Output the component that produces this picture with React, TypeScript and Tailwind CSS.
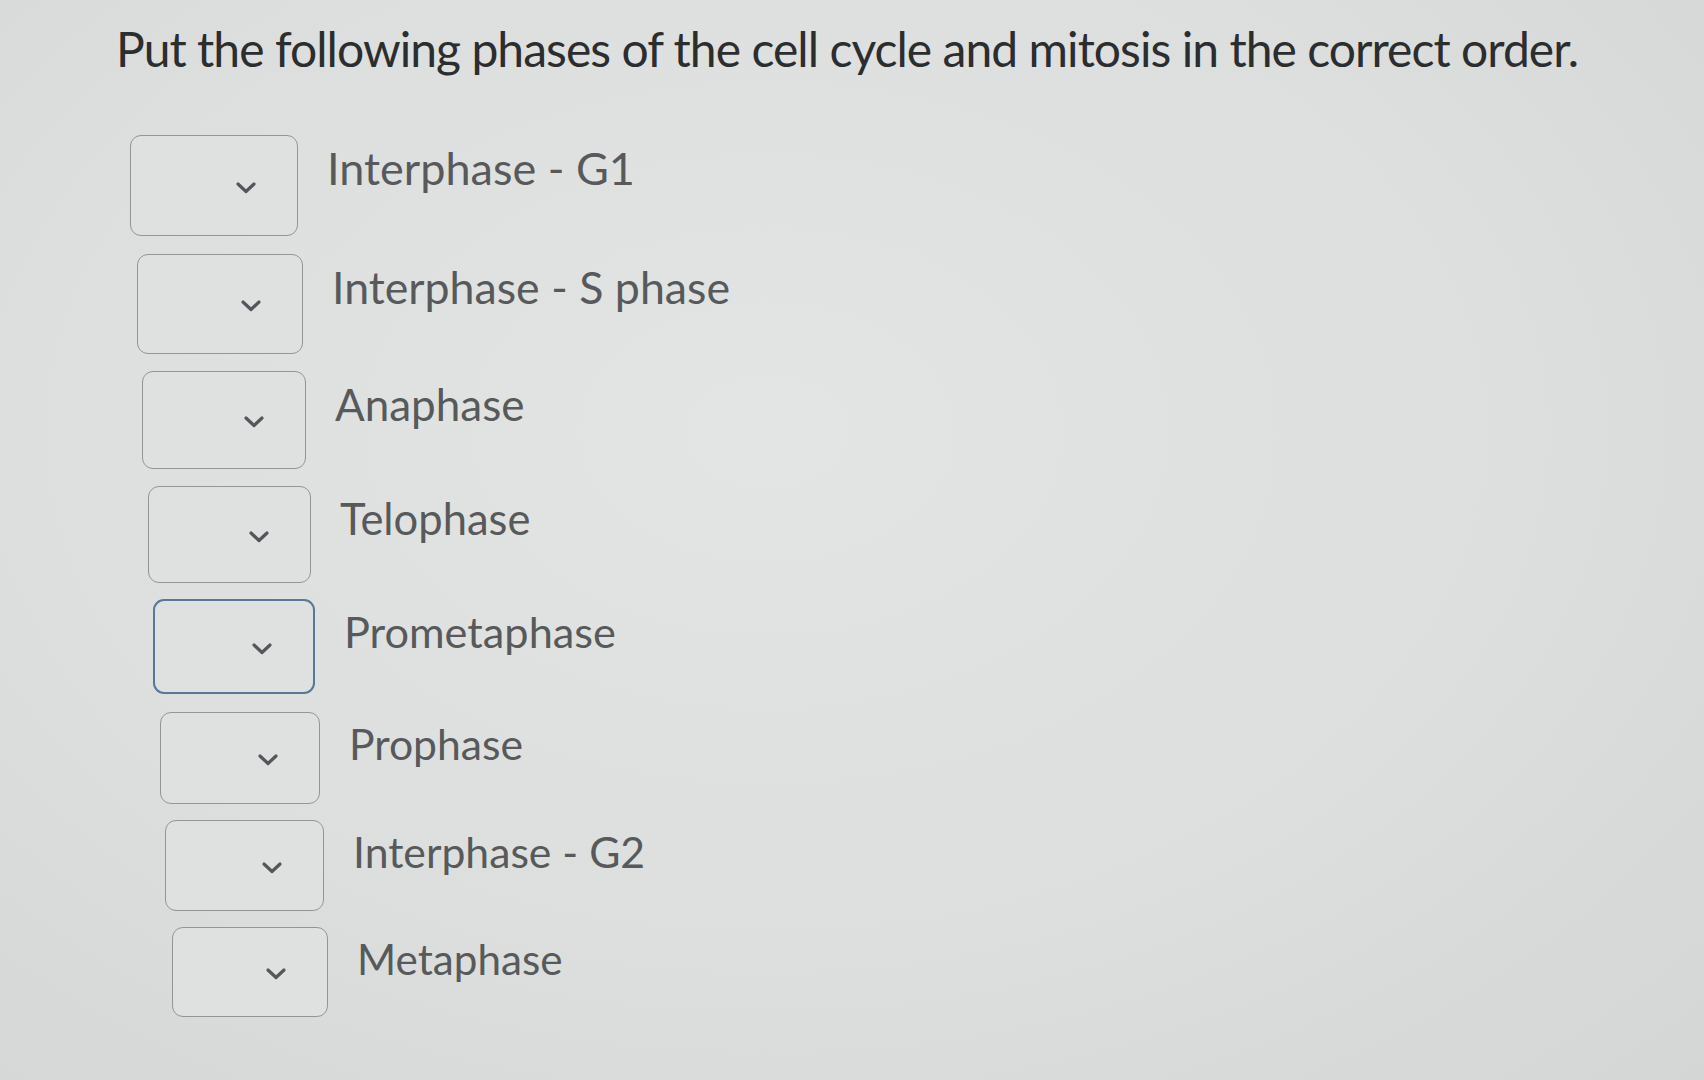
import React from "react";

type Row = {
  label: string;
  rowClass: string;
  boxClass: string;
  textClass: string;
  focused?: boolean;
};

// Each dropdown row, in the order the question lists them.
const rows: Row[] = [
  { label: "Interphase - G1", rowClass: "mt-[62px] ml-[130px]", boxClass: "w-[168px] h-[101px]", textClass: "text-[45px]" },
  { label: "Interphase - S phase", rowClass: "mt-[18px] ml-[137px]", boxClass: "w-[166px] h-[100px]", textClass: "text-[44.7px]" },
  { label: "Anaphase", rowClass: "mt-[17px] ml-[142px]", boxClass: "w-[164px] h-[98px]", textClass: "text-[44px]" },
  { label: "Telophase", rowClass: "mt-[17px] ml-[148px]", boxClass: "w-[163px] h-[97px]", textClass: "text-[43.5px]" },
  { label: "Prometaphase", rowClass: "mt-[16px] ml-[153px]", boxClass: "w-[162px] h-[95px]", textClass: "text-[43.3px]", focused: true },
  { label: "Prophase", rowClass: "mt-[18px] ml-[160px]", boxClass: "w-[160px] h-[92px]", textClass: "text-[42.7px]" },
  { label: "Interphase - G2", rowClass: "mt-[16px] ml-[165px]", boxClass: "w-[159px] h-[91px]", textClass: "text-[42.7px]" },
  { label: "Metaphase", rowClass: "mt-[16px] ml-[172px]", boxClass: "w-[156px] h-[90px]", textClass: "text-[42.2px]" },
];

function Chevron() {
  return (
    <svg width="22" height="13" viewBox="0 0 22 13" fill="none" aria-hidden="true">
      <path d="M3 3 L11 10.5 L19 3" stroke="#53565a" strokeWidth="3.2" strokeLinecap="round" strokeLinejoin="round" />
    </svg>
  );
}

function OrderSelect({ row }: { row: Row }) {
  const border = row.focused
    ? "border-[2.5px] border-[#56789a]"
    : "border-[1.5px] border-[#939698]";
  return (
    <div className={`flex items-start ${row.rowClass}`}>
      <div
        className={`${row.boxClass} ${border} shrink-0 rounded-[11px] bg-[#dfe1e0] flex items-center justify-end pr-[40px] pt-[3px]`}
      >
        <Chevron />
      </div>
      <span
        className={`ml-[29px] pt-[11px] ${row.textClass} leading-none text-[#57595b] whitespace-nowrap font-['Lato',sans-serif]`}
      >
        {row.label}
      </span>
    </div>
  );
}

export default function App() {
  return (
    <div className="w-[1704px] h-[1080px] overflow-hidden bg-[radial-gradient(ellipse_at_45%_40%,#e3e5e4_0%,#dcdfde_55%,#d3d6d5_100%)] font-['Lato',sans-serif]">
      <h1 className="pt-[25px] pl-[116px] text-[48px] tracking-[-0.95px] leading-none font-normal text-[#2c2d2e] whitespace-nowrap">
        Put the following phases of the cell cycle and mitosis in the correct order.
      </h1>
      <div className="flex flex-col">
        {rows.map((row) => (
          <OrderSelect key={row.label} row={row} />
        ))}
      </div>
    </div>
  );
}
